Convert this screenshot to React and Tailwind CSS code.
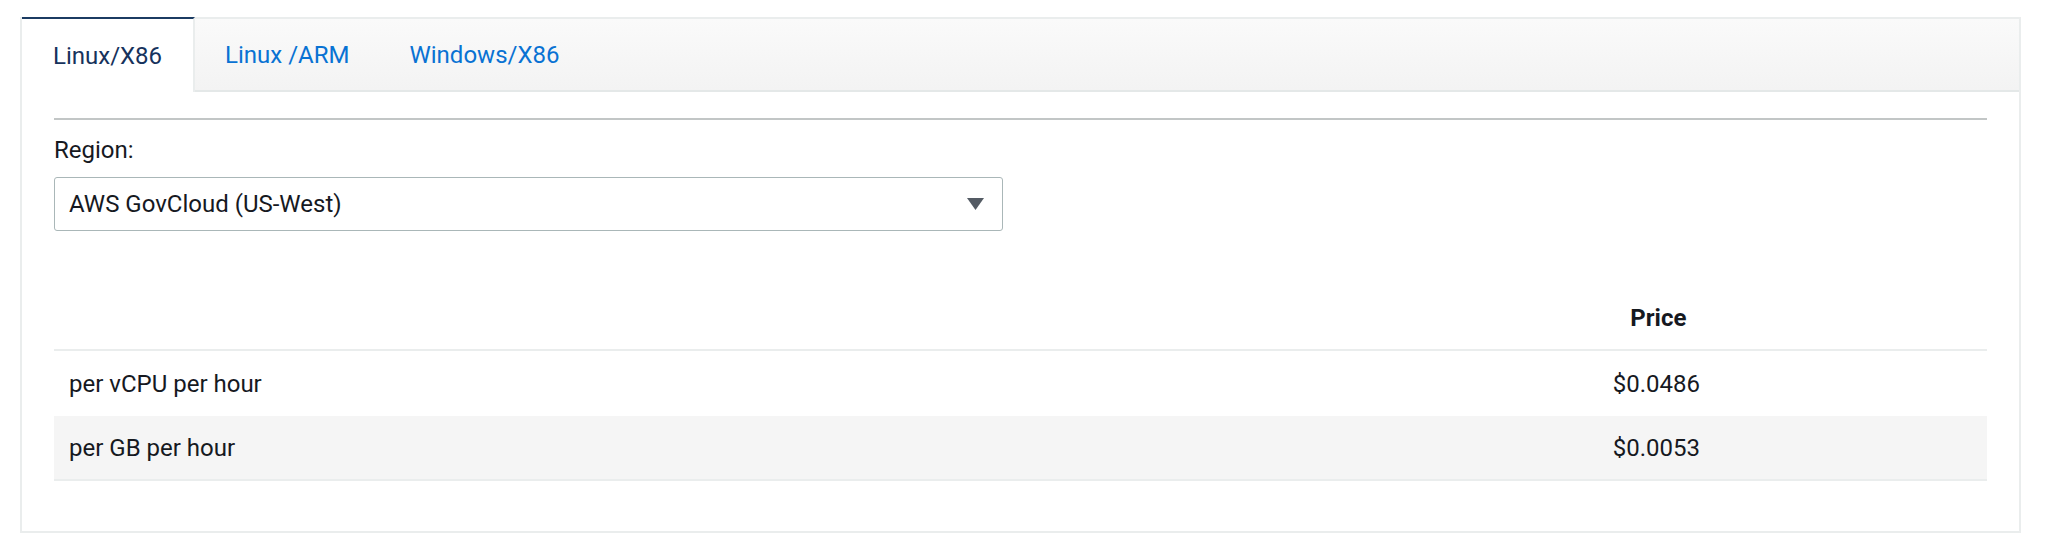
import React from 'react';

const tabs = ['Linux/X86', 'Linux /ARM', 'Windows/X86'];

const rows = [
    { label: 'per vCPU per hour', price: '$0.0486' },
    { label: 'per GB per hour', price: '$0.0053' },
];

const App = () => {
    return (
        <div className="min-h-[556px] bg-white pt-[17px] pl-[20px] font-['Roboto','Liberation_Sans',sans-serif] text-[24px] text-[#16191f]">
            <div className="w-[2001px] border-2 border-[#eaeded] bg-white">
                {/* Tabs */}
                <div className="flex h-[73px] border-b-2 border-[#e4e8e8] bg-gradient-to-b from-[#fafafa] to-[#f3f3f3]">
                    {tabs.map((tab, i) =>
                        i === 0 ? (
                            <div
                                key={tab}
                                className="-mt-[2px] -mb-[2px] flex items-center border-t-2 border-r-2 border-t-[#1b3b62] border-r-[#eaeded] bg-white px-[31px] text-[#16325c]"
                            >
                                {tab}
                            </div>
                        ) : (
                            <div key={tab} className="flex items-center px-[30px] text-[#0972d3]">
                                {tab}
                            </div>
                        )
                    )}
                </div>

                {/* Content */}
                <div className="px-[32px] pb-[50px]">
                    <div className="mt-[26px] h-[2px] bg-[#c2c6c6]"></div>

                    <div className="mt-[12px] leading-[36px]">Region:</div>

                    <div className="mt-[9px] flex h-[54px] w-[949px] items-center justify-between rounded-[3px] border border-[#aab7b8] bg-white pl-[14px] pr-[18px]">
                        <span>AWS GovCloud (US-West)</span>
                        <svg width="17" height="12" viewBox="0 0 17 12">
                            <polygon points="0,0 17,0 8.5,12" fill="#545b64" />
                        </svg>
                    </div>

                    {/* Price table */}
                    <div className="mt-[55px]">
                        <div className="grid h-[65px] grid-cols-[66%_1fr] border-b-2 border-[#eaeded]">
                            <div></div>
                            <div className="flex items-center justify-center font-bold">Price</div>
                        </div>
                        {rows.map((row, i) => (
                            <div
                                key={row.label}
                                className={
                                    i % 2 === 1
                                        ? 'grid h-[65px] grid-cols-[66%_1fr] border-b-2 border-[#eaeded] bg-[#f5f5f5]'
                                        : 'grid h-[65px] grid-cols-[66%_1fr]'
                                }
                            >
                                <div className="flex items-center px-[15px]">{row.label}</div>
                                <div className="flex items-center justify-center pr-[4px]">{row.price}</div>
                            </div>
                        ))}
                    </div>
                </div>
            </div>
        </div>
    );
};

export default App;
